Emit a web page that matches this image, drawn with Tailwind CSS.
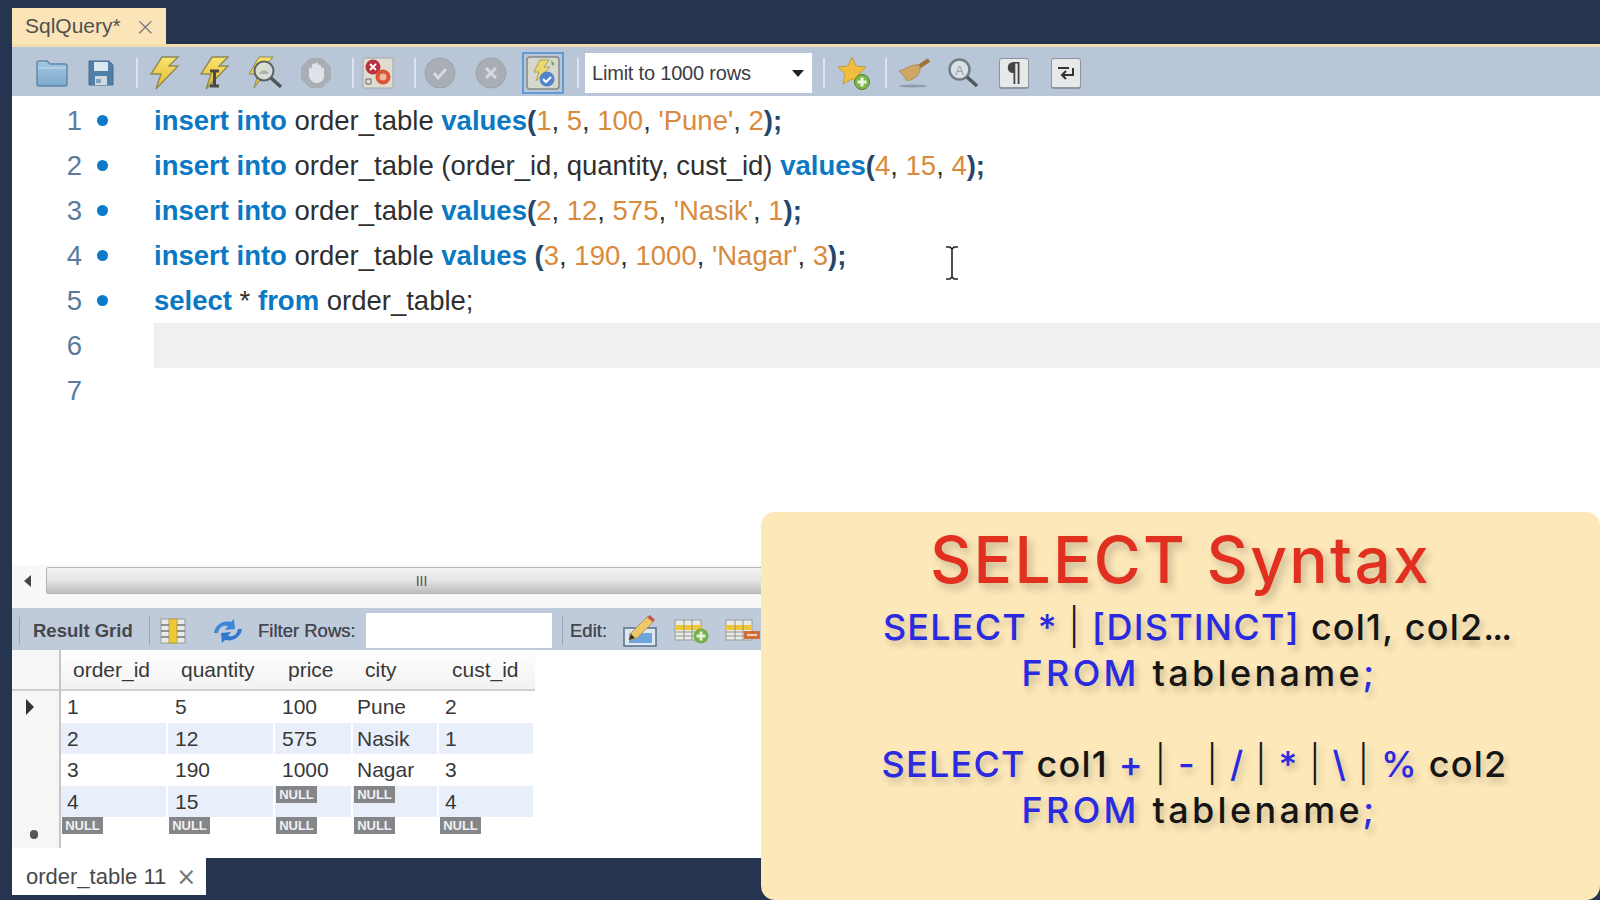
<!DOCTYPE html>
<html><head><meta charset="utf-8"><script src="https://cdn.jsdelivr.net/npm/@tailwindcss/browser@4"></script></head>
<body class="m-0">
<svg width="0" height="0" class="absolute"><defs>
<linearGradient id="bolt" x1="0" y1="0" x2="0" y2="1"><stop offset="0" stop-color="#fbe56f"/><stop offset="1" stop-color="#e2b52f"/></linearGradient>
<linearGradient id="fold" x1="0" y1="0" x2="0" y2="1"><stop offset="0" stop-color="#a5c8e2"/><stop offset="1" stop-color="#7eaacb"/></linearGradient>
</defs></svg>
<div class="relative w-[1600px] h-[900px] overflow-hidden bg-[#25344f] pl-[12px] flex flex-col font-['Liberation_Sans',sans-serif] text-[#2f2f2f]">
  <div class="h-[44px] pt-[8px] shrink-0 flex">
    <div class="w-[154px] bg-[#fbe5b8] flex items-center pl-[13px] text-[21px] text-[#505050] gap-[14px]"><span>SqlQuery*</span><span class="text-[#777] text-[25px] leading-none font-['DejaVu_Sans'] font-light">×</span></div>
  </div>
  <div class="h-[3px] bg-[#f3dcae] shrink-0"></div>
  <div class="h-[49px] bg-[#b9c6d8] shrink-0 flex items-center pl-[24px] pt-[3px] relative">
    <svg width="32" height="28" viewBox="0 0 32 28" class="mr-[20px] blur-[0.5px]"><path d="M1 4a2 2 0 0 1 2-2h8l3 3h15a2 2 0 0 1 2 2v18a2 2 0 0 1-2 2H3a2 2 0 0 1-2-2z" fill="url(#fold)" stroke="#5f87a8" stroke-width="1.500"/><path d="M2 9h28" stroke="#c4dcee"/></svg>
    <svg width="26" height="26" viewBox="0 0 26 26" class="mr-[22px] blur-[0.5px]"><path d="M1 1h20l4 4v20H1z" fill="#4f7fa8" stroke="#45708f"/><rect x="6" y="2" width="14" height="9" fill="#dce6ee"/><rect x="7" y="16" width="12" height="9" fill="#cfd9e1"/><rect x="8" y="19" width="5" height="4" fill="#7fa0ba"/></svg>
    <div class="w-[2px] h-[30px] bg-[#dbe3ee] mr-[11px]"></div>
    <svg width="32" height="34" viewBox="0 0 32 34" class="mr-[18px] blur-[0.5px]"><path d="M13 1h16l-9 9h9L7 33l5-15H2z" fill="url(#bolt)" stroke="#8d8a55" stroke-width="1.400"/></svg>
    <svg width="32" height="34" viewBox="0 0 32 34" class="mr-[16px] blur-[0.5px]"><path d="M13 1h16l-9 9h9L7 33l5-15H2z" fill="url(#bolt)" stroke="#8d8a55" stroke-width="1.400"/><path d="M11 15h9M11 30h9M15.500 15v15" stroke="#4a4a44" stroke-width="3" fill="none"/></svg>
    <svg width="36" height="34" viewBox="0 0 36 34" class="mr-[17px] blur-[0.5px]"><path d="M12 1h14l-8 9h6L7 32l4-14H2z" fill="url(#bolt)" stroke="#8d8a55"/><circle cx="17" cy="15" r="9.500" fill="#d8e0dd" fill-opacity=".9" stroke="#5a6468" stroke-width="2"/><path d="M12 18c2-5 8-5 10 0z" fill="#a9b3ae"/><path d="M24 22l10 9" stroke="#4f5558" stroke-width="3.500"/></svg>
    <svg width="32" height="32" viewBox="0 0 32 32" class="mr-[20px] blur-[0.5px]"><path d="M10 1h12l9 9v12l-9 9H10l-9-9V10z" fill="#a8aeb4"/><path d="M9 20v-8a1.500 1.500 0 0 1 3 0V8a1.500 1.500 0 0 1 3 0V7a1.500 1.500 0 0 1 3 0v2a1.500 1.500 0 0 1 3 0v3a1.500 1.500 0 0 1 3 0v7c0 4-3 7-7 7s-6-2-8-6z" fill="#dfe2e6"/></svg>
    <div class="w-[2px] h-[30px] bg-[#dbe3ee] mr-[8px]"></div>
    <svg width="32" height="32" viewBox="0 0 32 32" class="mr-[20px] blur-[0.6px]"><rect x="1" y="1" width="30" height="30" rx="2" fill="#dfdcd2" stroke="#a5a6a4"/><circle cx="11" cy="10" r="7.500" fill="#b8323f"/><path d="M8 7l6 6M14 7l-6 6" stroke="#fff" stroke-width="1.800"/><circle cx="21" cy="20" r="7.500" fill="#dc5436"/><circle cx="21" cy="20" r="3.500" fill="#f2b9a0"/><path d="M4 22h5v5H4z" fill="none" stroke="#666"/></svg>
    <div class="w-[2px] h-[30px] bg-[#dbe3ee] mr-[8px]"></div>
    <svg width="32" height="32" viewBox="0 0 32 32" class="mr-[19px] blur-[0.5px]"><circle cx="16" cy="16" r="15" fill="#a8aeb4" stroke="#9ba1a8"/><path d="M10 16l4 5 8-9" stroke="#d5d9dd" stroke-width="3" fill="none"/></svg>
    <svg width="32" height="32" viewBox="0 0 32 32" class="mr-[15px] blur-[0.5px]"><circle cx="16" cy="16" r="15" fill="#a8aeb4" stroke="#9ba1a8"/><path d="M11 11l10 10M21 11l-10 10" stroke="#d5d9dd" stroke-width="3"/></svg>
    <div class="w-[42px] h-[42px] border-2 border-[#5f9bd8] bg-[#bcc5d2] flex items-center justify-center mr-[13px]">
      <svg width="34" height="34" viewBox="0 0 34 34" class="blur-[0.5px]"><rect x="1" y="1" width="32" height="32" rx="3" fill="#d6d8cd" stroke="#85888a" stroke-width="1.500"/><path d="M14 4h9l-5 7h6L10 25l3-9H8z" fill="#ecd96e" stroke="#a6a268"/><path d="M25 4l4 4-3 2z" fill="#7aa968"/><circle cx="21" cy="23" r="7.500" fill="#4f84cc"/><path d="M17 23l3 3 5-5" stroke="#fff" stroke-width="2" fill="none"/></svg>
    </div>
    <div class="w-[2px] h-[30px] bg-[#dbe3ee] mr-[6px]"></div>
    <div class="w-[227px] h-[40px] bg-white flex items-center pl-[7px] text-[20px] text-[#3c3c44] relative mr-[11px] tracking-[-0.2px]">Limit to 1000 rows<svg width="12" height="8" viewBox="0 0 12 8" class="absolute right-[8px] top-[17px]"><path d="M0 0h12L6 7z" fill="#222"/></svg></div>
    <div class="w-[2px] h-[30px] bg-[#dbe3ee] mr-[12px]"></div>
    <svg width="34" height="34" viewBox="0 0 34 34" class="mr-[14px] blur-[0.5px]"><path d="M15 1l4 9 10 1-7 7 2 10-9-5-9 5 2-10-7-7 10-1z" fill="#f0bd3c" stroke="#c49a43"/><circle cx="25" cy="26" r="7.500" fill="#7bb848" stroke="#4f7f32"/><path d="M25 21.500v9M20.500 26h9" stroke="#eaf5df" stroke-width="3"/></svg>
    <div class="w-[2px] h-[30px] bg-[#dbe3ee] mr-[11px]"></div>
    <svg width="34" height="32" viewBox="0 0 34 32" class="mr-[15px] blur-[0.6px]"><path d="M31 3l-12 8" stroke="#a4733a" stroke-width="4.500"/><path d="M21 8c2 4 1 7-2 11-5 4-8 5-11 4-1-4-5-7-7-9 7-2 13-7 20-6z" fill="#cda867" stroke="#ae8c52"/><ellipse cx="15" cy="29" rx="14" ry="1.500" fill="#8e9bac"/></svg>
    <svg width="32" height="32" viewBox="0 0 32 32" class="mr-[20px] blur-[0.5px]"><circle cx="12.500" cy="12.500" r="10" fill="#d9e0e8" stroke="#737d86" stroke-width="2.500"/><text x="12.500" y="17.500" text-anchor="middle" font-size="13" fill="#98a2ab" font-family="Liberation Sans">A</text><path d="M20 20l10 9" stroke="#4f565c" stroke-width="3.500"/></svg>
    <div class="w-[30px] h-[31px] rounded-[3px] bg-[#e6e8ea] border border-[#8d959d] border-b-2 flex items-center justify-center text-[26px] leading-none text-[#444] mr-[22px] font-['DejaVu_Sans'] blur-[0.4px]">¶</div>
    <div class="w-[30px] h-[31px] rounded-[3px] bg-[#e6e8ea] border border-[#8d959d] border-b-2 flex items-center justify-center blur-[0.4px]"><svg width="18" height="16" viewBox="0 0 18 16"><path d="M1 3h11M16 3v7H6M9 6l-4 4 4 4" stroke="#333" stroke-width="2" fill="none"/></svg></div>
  </div>
  <div class="relative h-[469px] bg-white shrink-0 text-[27.500px] leading-[45px] pt-[2px]">
    <div class="absolute left-[142px] right-0 top-[227px] h-[45px] bg-[#f0f0f0]"></div>
    <div class="relative flex flex-col">
      <div class="flex h-[45px]"><span class="w-[70px] text-right text-[#5a7c9c]">1</span><span class="w-[72px] flex"><i class="ml-[15px] mt-[17px] w-[11px] h-[11px] rounded-full bg-[#0b7bc9]"></i></span><span class="whitespace-pre"><b class="text-[#0a78c2] font-bold">insert into</b> order_table <b class="text-[#0a78c2]">values</b><b class="text-[#24466b]">(</b><span class="text-[#d98a3d]">1</span>, <span class="text-[#d98a3d]">5</span>, <span class="text-[#d98a3d]">100</span>, <span class="text-[#d98a3d]">'Pune'</span>, <span class="text-[#d98a3d]">2</span><b class="text-[#24466b]">);</b></span></div>
      <div class="flex h-[45px]"><span class="w-[70px] text-right text-[#5a7c9c]">2</span><span class="w-[72px] flex"><i class="ml-[15px] mt-[17px] w-[11px] h-[11px] rounded-full bg-[#0b7bc9]"></i></span><span class="whitespace-pre"><b class="text-[#0a78c2]">insert into</b> order_table (order_id, quantity, cust_id) <b class="text-[#0a78c2]">values</b><b class="text-[#24466b]">(</b><span class="text-[#d98a3d]">4</span>, <span class="text-[#d98a3d]">15</span>, <span class="text-[#d98a3d]">4</span><b class="text-[#24466b]">);</b></span></div>
      <div class="flex h-[45px]"><span class="w-[70px] text-right text-[#5a7c9c]">3</span><span class="w-[72px] flex"><i class="ml-[15px] mt-[17px] w-[11px] h-[11px] rounded-full bg-[#0b7bc9]"></i></span><span class="whitespace-pre"><b class="text-[#0a78c2]">insert into</b> order_table <b class="text-[#0a78c2]">values</b><b class="text-[#24466b]">(</b><span class="text-[#d98a3d]">2</span>, <span class="text-[#d98a3d]">12</span>, <span class="text-[#d98a3d]">575</span>, <span class="text-[#d98a3d]">'Nasik'</span>, <span class="text-[#d98a3d]">1</span><b class="text-[#24466b]">);</b></span></div>
      <div class="flex h-[45px]"><span class="w-[70px] text-right text-[#5a7c9c]">4</span><span class="w-[72px] flex"><i class="ml-[15px] mt-[17px] w-[11px] h-[11px] rounded-full bg-[#0b7bc9]"></i></span><span class="whitespace-pre"><b class="text-[#0a78c2]">insert into</b> order_table <b class="text-[#0a78c2]">values</b> <b class="text-[#24466b]">(</b><span class="text-[#d98a3d]">3</span>, <span class="text-[#d98a3d]">190</span>, <span class="text-[#d98a3d]">1000</span>, <span class="text-[#d98a3d]">'Nagar'</span>, <span class="text-[#d98a3d]">3</span><b class="text-[#24466b]">);</b></span></div>
      <div class="flex h-[45px]"><span class="w-[70px] text-right text-[#5a7c9c]">5</span><span class="w-[72px] flex"><i class="ml-[15px] mt-[17px] w-[11px] h-[11px] rounded-full bg-[#0b7bc9]"></i></span><span class="whitespace-pre"><b class="text-[#0a78c2]">select</b> * <b class="text-[#0a78c2]">from</b> order_table;</span></div>
      <div class="flex h-[45px]"><span class="w-[70px] text-right text-[#5a7c9c]">6</span></div>
      <div class="flex h-[45px]"><span class="w-[70px] text-right text-[#5a7c9c]">7</span></div>
    </div>
    <svg width="16" height="34" viewBox="0 0 16 34" class="absolute left-[932px] top-[150px]"><path d="M2 1h4l2 2 2-2h4M8 3v28M2 33h4l2-2 2 2h4" stroke="#222" stroke-width="1.600" fill="none"/></svg>
  </div>
  <div class="h-[43px] bg-[#f8f8f8] shrink-0 pt-[2px]">
    <div class="h-[27px] w-full flex items-center">
      <svg width="10" height="12" viewBox="0 0 10 12" class="ml-[11px]"><path d="M8 0v12L1 6z" fill="#444"/></svg>
      <div class="ml-[13px] w-[1000px] h-[27px] rounded-[2px] bg-gradient-to-b from-[#f3f3f3] via-[#e4e4e4] to-[#bdbdbd] border border-[#b5b5b5] flex justify-center pr-[249px] items-center text-[#555] text-[14px] leading-none">III</div>
    </div>
  </div>
  <div class="h-[42px] bg-[#bfcbdb] shrink-0 flex items-center pl-[7px] pt-[3px] text-[#44484e] relative">
    <div class="w-[1px] h-[28px] bg-[#9ca6b3] mr-[13px]"></div>
    <b class="font-bold w-[116px] text-[18.500px]">Result Grid</b>
    <div class="w-[1px] h-[28px] bg-[#9ca6b3] mr-[10px]"></div>
    <svg width="26" height="26" viewBox="0 0 26 26" class="mr-[27px] blur-[0.5px]"><rect x="1" y="1" width="24" height="24" fill="#e9eaea" stroke="#9a9d92"/><rect x="9" y="1" width="8" height="24" fill="#f0c836" stroke="#bda244"/><path d="M1 7h8M17 7h8M1 13h8M17 13h8M1 19h8M17 19h8" stroke="#777" stroke-width="1.500"/></svg>
    <svg width="30" height="24" viewBox="0 0 30 24" class="mr-[15px] blur-[0.6px]"><path d="M1 14C2 6 10 1 18 3l3-3 1 10-10 1 3-4c-5-1-9 1-10 7z" fill="#3f86d9"/><path d="M29 10c-1 8-9 13-17 11l-3 3-1-10 10-1-3 4c5 1 9-1 10-7z" fill="#2f78cf"/></svg>
    <span class="w-[108px] text-[18.500px] [text-shadow:0_0_0.500px_#44484e]">Filter Rows:</span>
    <div class="w-[186px] h-[35px] bg-white mr-[10px]"></div>
    <div class="w-[1px] h-[28px] bg-[#9ca6b3] mr-[7px]"></div>
    <span class="text-[18.500px] [text-shadow:0_0_0.500px_#44484e] mr-[16px]">Edit:</span>
    <svg width="34" height="32" viewBox="0 0 34 32" class="mr-[17px] blur-[0.5px]"><rect x="1" y="13" width="32" height="18" fill="#dfe8f0" stroke="#56708c" stroke-width="1.500"/><rect x="6" y="18" width="23" height="10" fill="#6ea6dc"/><path d="M6 25l2-7L24 2l6 5-16 16z" fill="#edc867" stroke="#b09660"/><path d="M24 2l6 5 2-2-5-5z" fill="#c6564c"/><path d="M6 25l2-6 4 4z" fill="#333"/></svg>
    <svg width="36" height="26" viewBox="0 0 36 26" class="mr-[15px] blur-[0.5px]"><rect x="1" y="2" width="26" height="20" fill="#e9ebe9" stroke="#999d96"/><rect x="1" y="7" width="26" height="5" fill="#f0c836"/><path d="M1 14h26M1 18h26M10 2v20M18 2v20" stroke="#90938a"/><circle cx="27" cy="18" r="7.500" fill="#74b04a"/><path d="M27 13.500v9M22.500 18h9" stroke="#e7f2da" stroke-width="3"/></svg>
    <svg width="36" height="26" viewBox="0 0 36 26" class="blur-[0.5px]"><rect x="1" y="2" width="26" height="20" fill="#e9ebe9" stroke="#999d96"/><rect x="1" y="7" width="26" height="5" fill="#f0c836"/><path d="M1 14h26M1 18h26M10 2v20M18 2v20" stroke="#90938a"/><rect x="19" y="13" width="16" height="8" fill="#cf6d3c"/><path d="M22 17h10" stroke="#f4d0b8" stroke-width="2"/></svg>
  </div>
  <div class="h-[198px] bg-white shrink-0 flex text-[21px] leading-[31.500px] text-[#383838]">
    <div class="w-[49px] bg-[#f6f6f6] border-r-2 border-[#c6c6c6] flex flex-col">
      <div class="h-[41px] border-b-2 border-[#d0d0d0]"></div>
      <div class="h-[31.500px] flex items-center pl-[13px]"><svg width="10" height="16" viewBox="0 0 10 16"><path d="M1 0l8 8-8 8z" fill="#333"/></svg></div>
      <div class="h-[31.500px]"></div><div class="h-[31.500px]"></div><div class="h-[31.500px]"></div>
      <div class="h-[31.500px] flex items-end pl-[18px] pb-[9px]"><span class="w-[8px] h-[9px] rounded-full bg-[#555]"></span></div>
    </div>
    <div class="w-[474px]">
      <div class="flex h-[41px] items-center border-b-2 border-[#d0d0d0] bg-gradient-to-b from-white to-[#f2f2f2]">
        <span class="w-[107px] pl-[12px]">order_id</span><span class="w-[107px] pl-[13px]">quantity</span><span class="w-[78px] pl-[13px]">price</span><span class="w-[86px] pl-[12px]">city</span><span class="pl-[13px]">cust_id</span>
      </div>
      <div class="flex h-[31.500px]"><span class="w-[107px] pl-[6px]">1</span><span class="w-[107px] pl-[7px]">5</span><span class="w-[78px] pl-[7px]">100</span><span class="w-[86px] pl-[4px]">Pune</span><span class="pl-[6px]">2</span></div>
      <div class="flex h-[31.500px] [&>span]:bg-[#e9effa] [&>span]:border-r-2 [&>span]:border-white"><span class="w-[107px] pl-[6px]">2</span><span class="w-[107px] pl-[7px]">12</span><span class="w-[78px] pl-[7px]">575</span><span class="w-[86px] pl-[4px]">Nasik</span><span class="w-[96px] pl-[6px]">1</span></div>
      <div class="flex h-[31.500px]"><span class="w-[107px] pl-[6px]">3</span><span class="w-[107px] pl-[7px]">190</span><span class="w-[78px] pl-[7px]">1000</span><span class="w-[86px] pl-[4px]">Nagar</span><span class="pl-[6px]">3</span></div>
      <div class="flex h-[31.500px] [&>span]:bg-[#e9effa] [&>span]:border-r-2 [&>span]:border-white"><span class="w-[107px] pl-[6px]">4</span><span class="w-[107px] pl-[7px]">15</span><span class="w-[78px] pl-[1px] text-[13px] leading-[17px] font-bold text-[#f0f0f0]"><i class="not-italic block w-[41px] bg-[#858689] text-center">NULL</i></span><span class="w-[86px] pl-[1px] text-[13px] leading-[17px] font-bold text-[#f0f0f0]"><i class="not-italic block w-[41px] bg-[#858689] text-center">NULL</i></span><span class="w-[96px] pl-[6px]">4</span></div>
      <div class="flex h-[31.500px] text-[13px] leading-[17px] font-bold text-[#f0f0f0]"><span class="w-[107px] pl-[1px]"><i class="not-italic block w-[41px] bg-[#858689] text-center">NULL</i></span><span class="w-[107px] pl-[1px]"><i class="not-italic block w-[41px] bg-[#858689] text-center">NULL</i></span><span class="w-[78px] pl-[1px]"><i class="not-italic block w-[41px] bg-[#858689] text-center">NULL</i></span><span class="w-[86px] pl-[1px]"><i class="not-italic block w-[41px] bg-[#858689] text-center">NULL</i></span><span class="pl-[1px]"><i class="not-italic block w-[41px] bg-[#858689] text-center">NULL</i></span></div>
    </div>
  </div>
  <div class="h-[10px] bg-white shrink-0"></div>
  <div class="h-[37px] w-[194px] bg-white flex items-center pl-[14px] text-[22px] text-[#484848] gap-[10px] shrink-0"><span>order_table 11</span><span class="text-[#777] text-[24px] font-['DejaVu_Sans'] leading-none">×</span></div>
  <div class="absolute left-[761px] top-[512px] w-[839px] h-[388px] rounded-[14px] bg-[#fde8b9] flex flex-col font-['Inter',sans-serif]">
    <div class="text-center text-[64px] leading-[70px] tracking-[2.3px] text-[#e1301f] font-medium mt-[13px] [text-shadow:4px_5px_9px_rgba(0,0,0,.22)]">SELECT Syntax</div>
    <div class="text-center text-[36px] leading-[45.500px] tracking-[1.2px] mt-[10px] text-[#151515] [text-shadow:3px_5px_7px_rgba(0,0,0,.2)] font-medium [&_u]:no-underline [&_u]:font-light">
      <div class="pl-[32px]"><span class="text-[#2a2ae0]">SELECT * </span><u>|</u> <span class="text-[#2a2ae0]">[DISTINCT]</span> col1, col2<span class="tracking-[-2px]">...</span></div>
      <div class="pl-[38px] tracking-[3.300px]"><span class="text-[#2a2ae0]">FROM</span> tablename<span class="text-[#2a2ae0]">;</span></div>
      <div class="h-[46px]"></div>
      <div class="pl-[28px]"><span class="text-[#2a2ae0]">SELECT</span> col1 <span class="text-[#2a2ae0]">+</span> <u>|</u> <span class="text-[#2a2ae0]">-</span> <u>|</u> <span class="text-[#2a2ae0]">/</span> <u>|</u> <span class="text-[#2a2ae0]">*</span> <u>|</u> <span class="text-[#2a2ae0]">\</span> <u>|</u> <span class="text-[#2a2ae0]">%</span> col2</div>
      <div class="pl-[38px] tracking-[3.300px]"><span class="text-[#2a2ae0]">FROM</span> tablename<span class="text-[#2a2ae0]">;</span></div>
    </div>
  </div>
</div>
</body></html>
